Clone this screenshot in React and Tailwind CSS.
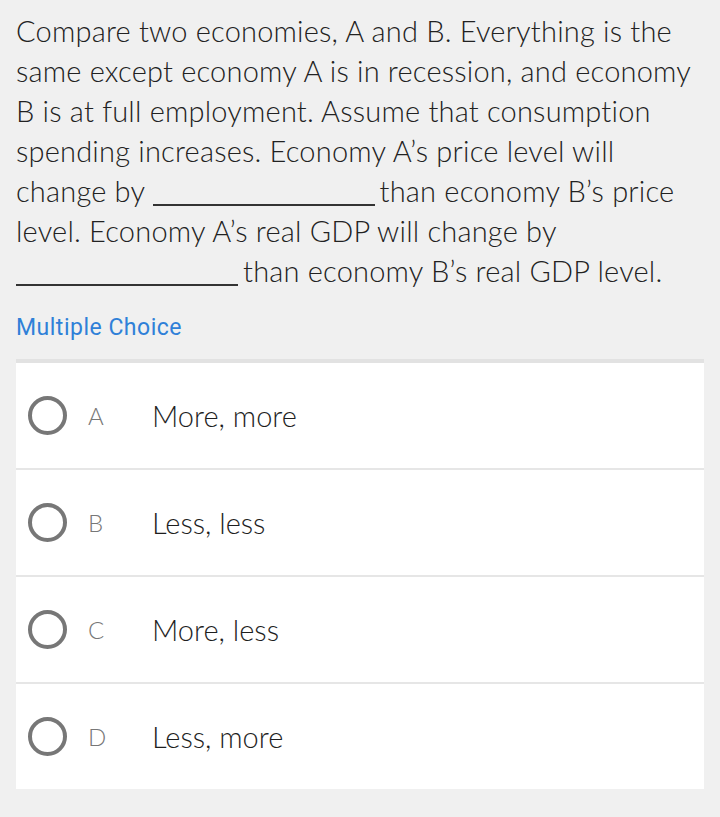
import React from 'react';

const choices = [
  { letter: 'A', text: 'More, more' },
  { letter: 'B', text: 'Less, less' },
  { letter: 'C', text: 'More, less' },
  { letter: 'D', text: 'Less, more' },
];

const Radio = () => (
  <span className="block w-[39px] h-[39px] rounded-full border-[4px] border-[#777777] shrink-0" />
);

const Blank = () => (
  <span className="inline-block w-[222px] border-b-2 border-[#333333] align-[-4px] mr-[5px]" />
);

export default function App() {
  return (
    <div className="min-h-[817px] bg-[#f0f0f0] px-4 pt-[11px] pb-[29px]">
      <p
        className="text-[29px] leading-[40px] text-[#222222] font-light tracking-[0.2px]"
        style={{ fontFamily: 'Lato, "Open Sans", sans-serif' }}
      >
        Compare two economies, A and B. Everything is the same except economy A is in recession,
        and economy B is at full employment. Assume that consumption spending increases. Economy
        A’s price level will change by <Blank />than economy B’s price level. Economy A’s
        real GDP will change by <Blank />than economy B’s real GDP level.
      </p>

      <div
        className="mt-[23px] text-[23px] leading-[28px] text-[#2f80d8] tracking-[0.5px]"
        style={{ fontFamily: 'Roboto, sans-serif' }}
      >
        Multiple Choice
      </div>

      <div className="mt-[17px] bg-white border-t-[4px] border-[#e2e2e2]">
        {choices.map((c, i) => (
          <div
            key={c.letter}
            className={
              i < choices.length - 1
                ? 'flex items-center h-[107px] border-b-2 border-[#e6e6e6]'
                : 'flex items-center h-[105px]'
            }
          >
            <div className="pl-[12px]">
              <Radio />
            </div>
            <span
              className="w-[85px] pl-[21px] text-[24px] font-light text-[#777777]"
              style={{ fontFamily: 'Lato, sans-serif' }}
            >
              {c.letter}
            </span>
            <span
              className="text-[29px] font-light text-[#1e1e1e]"
              style={{ fontFamily: 'Lato, sans-serif' }}
            >
              {c.text}
            </span>
          </div>
        ))}
      </div>
    </div>
  );
}
